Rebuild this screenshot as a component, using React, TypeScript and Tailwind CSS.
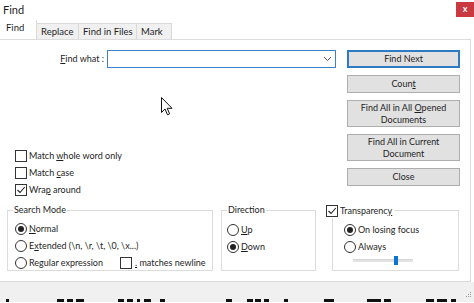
import React from "react";

const font = { fontFamily: 'Lato, "Noto Sans", Arial, sans-serif' };

function U({ children }: { children: React.ReactNode }) {
  return <span className="underline underline-offset-[1px]">{children}</span>;
}

function Check({ on = false }: { on?: boolean }) {
  return (
    <span className="w-[12px] h-[12px] border border-[#333] bg-white flex items-center justify-center shrink-0">
      {on && (
        <svg width="10" height="10" viewBox="0 0 10 10">
          <path d="M1.5 5 L4 7.5 L8.8 2" fill="none" stroke="#222" strokeWidth="1.1" />
        </svg>
      )}
    </span>
  );
}

function Radio({ on = false }: { on?: boolean }) {
  return (
    <span className="w-[12px] h-[12px] rounded-full border border-[#333] bg-white flex items-center justify-center shrink-0">
      {on && <span className="w-[6px] h-[6px] rounded-full bg-[#222]" />}
    </span>
  );
}

function Btn({ children, h, focus = false }: { children: React.ReactNode; h: string; focus?: boolean }) {
  return (
    <button
      className={
        "w-full bg-[#e1e1e1] text-center leading-[12px] flex items-center justify-center " +
        h +
        (focus ? " border-2 border-[#2f7ac4]" : " border border-[#adadad]")
      }
    >
      <span>{children}</span>
    </button>
  );
}

// the cropped text peeking in at the bottom edge
const blocks: [number, number][] = [
  [6, 3], [57, 7], [67, 6], [76, 8], [118, 6], [127, 6], [137, 3], [144, 7], [160, 5], [226, 6],
  [247, 6], [255, 6], [264, 5], [284, 4], [324, 10], [367, 7], [374, 7], [384, 7], [426, 8], [437, 10], [451, 5],
];

export default function App() {
  return (
    <div className="w-[474px] h-[303px] bg-white overflow-hidden relative text-[9px] text-[#1e1e1e]" style={font}>
      {/* title bar */}
      <div className="h-[20px] flex items-start justify-between">
        <span className="pl-[3px] pt-[2px] text-[11px] leading-[15px]">Find</span>
        <span className="mt-[2px] w-[18px] h-[15px] bg-[#c9393f] text-white text-[9px] leading-[14px] flex justify-center font-bold">
          x
        </span>
      </div>

      {/* tabs */}
      <div className="h-[19px] flex items-end text-[9.5px]">
        <div className="w-[37px] h-[19px] pl-[6px] leading-[16px] bg-white border-r border-[#d9d9d9]">Find</div>
        <div className="w-[42px] h-[16px] pl-[4px] bg-[#f0f0f0] border-t border-r border-[#d9d9d9] leading-[15px]">Replace</div>
        <div className="w-[58px] h-[16px] pl-[4px] bg-[#f0f0f0] border-t border-r border-[#d9d9d9] leading-[15px]">Find in Files</div>
        <div className="w-[35px] h-[16px] pl-[4px] bg-[#f0f0f0] border-t border-r border-[#d9d9d9] leading-[15px]">Mark</div>
      </div>

      {/* panel */}
      <div className="relative w-[471px] h-[243px] border-t border-r border-b border-[#dcdcdc] pt-[10px] whitespace-nowrap">
        <div className="flex">
          <div className="w-[347px]">
            <div className="flex items-center h-[18px]">
              <span className="w-[104px] text-right">
                <U>F</U>ind what :
              </span>
              <div className="ml-[3px] w-[229px] h-[18px] border border-[#3c82c8] flex items-center justify-end pr-[3px]">
                <svg width="9" height="6" viewBox="0 0 9 6">
                  <path d="M1 1 L4.5 4.5 L8 1" fill="none" stroke="#555" strokeWidth="1" />
                </svg>
              </div>
            </div>
            <div className="mt-[79px] pl-[15px]">
              <div className="h-[17px] flex items-center gap-[2px]">
                <Check />
                <span>
                  Match <U>w</U>hole word only
                </span>
              </div>
              <div className="h-[17px] flex items-center gap-[2px]">
                <Check />
                <span>
                  Match <U>c</U>ase
                </span>
              </div>
              <div className="h-[17px] flex items-center gap-[2px]">
                <Check on />
                <span>
                  Wra<U>p</U> around
                </span>
              </div>
            </div>
          </div>
          <div className="w-[113px] flex flex-col gap-[7px]">
            <Btn h="h-[18px]" focus>
              Find Next
            </Btn>
            <Btn h="h-[18px]">
              Coun<U>t</U>
            </Btn>
            <Btn h="h-[27px]">
              Find All in All <U>O</U>pened
              <br />
              Documents
            </Btn>
            <Btn h="h-[27px]">
              Find All in Current
              <br />
              Document
            </Btn>
            <Btn h="h-[18px]">Close</Btn>
          </div>
        </div>

        {/* group boxes */}
        <div className="flex mt-[12px] pl-[7px]">
          <div className="relative w-[206px] h-[61px] border border-[#dcdcdc] pt-[9px] pl-[7px]">
            <span className="absolute -top-[8px] left-[5px] px-[1px] bg-white leading-[14px]">Search Mode</span>
            <div className="h-[17px] flex items-center gap-[2px]">
              <Radio on />
              <span>
                <U>N</U>ormal
              </span>
            </div>
            <div className="h-[17px] flex items-center gap-[2px]">
              <Radio />
              <span>
                E<U>x</U>tended (\n, \r, \t, \0, \x...)
              </span>
            </div>
            <div className="h-[17px] flex items-center">
              <Radio />
              <span className="ml-[2px] w-[91px]">Re<U>g</U>ular expression</span>
              <Check />
              <span className="ml-[3px]">
                <U>.</U> matches newline
              </span>
            </div>
          </div>

          <div className="relative ml-[8px] w-[95px] h-[61px] border border-[#dcdcdc] pt-[10px] pl-[5px]">
            <span className="absolute -top-[8px] left-[5px] px-[1px] bg-white leading-[14px]">Direction</span>
            <div className="h-[17px] flex items-center gap-[2px]">
              <Radio />
              <span>
                <U>U</U>p
              </span>
            </div>
            <div className="h-[17px] flex items-center gap-[2px]">
              <Radio on />
              <span>
                <U>D</U>own
              </span>
            </div>
          </div>

          <div className="relative ml-[16px] w-[127px] h-[61px] border border-[#dcdcdc] pt-[10px] pl-[11px]">
            <span className="absolute -top-[7px] -left-[7px] pr-[2px] bg-white flex items-center gap-[2px] leading-[14px]">
              <Check on />
              <span>
                Transparenc<U>y</U>
              </span>
            </span>
            <div className="h-[17px] flex items-center gap-[2px]">
              <Radio on />
              <span>On losing focus</span>
            </div>
            <div className="h-[17px] flex items-center gap-[2px]">
              <Radio />
              <span>Always</span>
            </div>
            <div className="ml-[9px] mt-[1px] relative w-[60px] h-[9px] flex items-center">
              <div className="w-full h-[3px] bg-[#e3e3e3] border-t border-[#d6d6d6]" />
              <div className="absolute left-[41px] top-0 w-[4px] h-[9px] bg-[#0a74d6]" />
            </div>
          </div>
        </div>

        {/* mouse pointer */}
        <svg className="absolute left-[161px] top-[57px]" width="12" height="19" viewBox="0 0 12 19">
          <path
            d="M0.5 0.5 L0.5 15.5 L4 12 L6.5 17.8 L8.6 16.9 L6.2 11.3 L11 11.3 Z"
            fill="#fff"
            stroke="#111"
            strokeWidth="1"
            strokeLinejoin="miter"
          />
        </svg>
      </div>

      {/* bottom strip */}
      <div className="h-[20px] bg-[#f0f0f0] relative">
        <svg className="absolute left-0 bottom-0" width="474" height="20" viewBox="0 0 474 20">
          {blocks.map(([x, w], i) => (
            <rect key={i} x={x} y={17} width={w} height={3} fill="#111" />
          ))}
          <rect x="470" y="10" width="1" height="1" fill="#999" />
          <rect x="468" y="12" width="1" height="1" fill="#999" />
          <rect x="470" y="12" width="1" height="1" fill="#999" />
          <rect x="466" y="14" width="1" height="1" fill="#999" />
          <rect x="468" y="14" width="1" height="1" fill="#999" />
          <rect x="470" y="14" width="1" height="1" fill="#999" />
        </svg>
      </div>
    </div>
  );
}
